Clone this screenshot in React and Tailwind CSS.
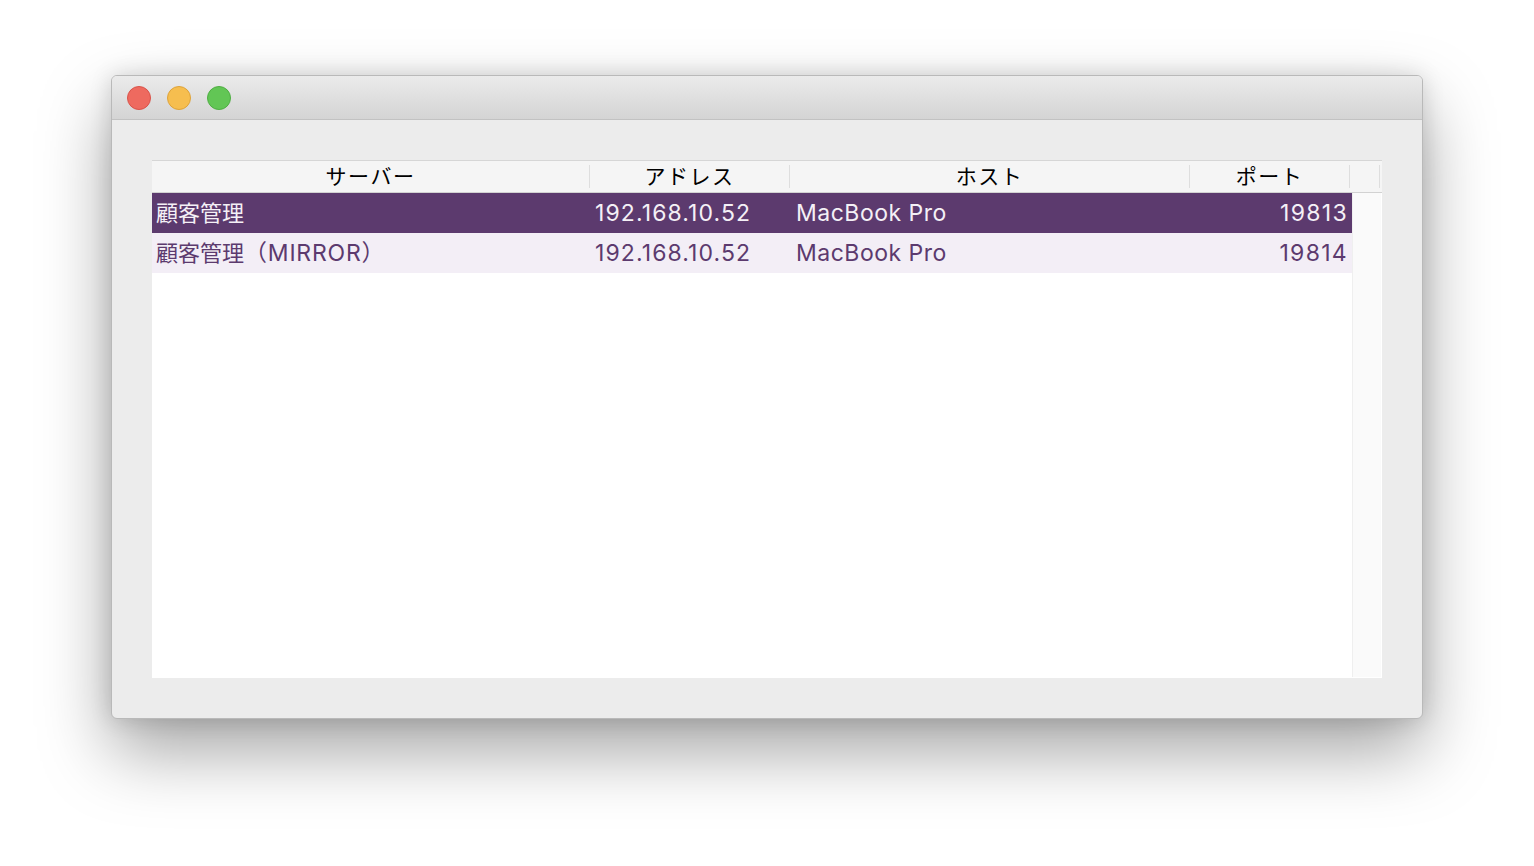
import React from 'react'

const columns = [
  { key: 'server', label: 'サーバー', width: 'w-[438px]' },
  { key: 'address', label: 'アドレス', width: 'w-[200px]' },
  { key: 'host', label: 'ホスト', width: 'w-[400px]' },
  { key: 'port', label: 'ポート', width: 'w-[160px]' },
]

const servers = [
  { server: '顧客管理', address: '192.168.10.52', host: 'MacBook Pro', port: '19813' },
  { server: '顧客管理', suffix: '（MIRROR）', address: '192.168.10.52', host: 'MacBook Pro', port: '19814' },
]

function TrafficLights() {
  return (
    <div className="flex items-center gap-[16px] pl-[15px]">
      <span className="w-[24px] h-[24px] rounded-full bg-[#ee6a5f] border border-[#d9534a]" />
      <span className="w-[24px] h-[24px] rounded-full bg-[#f6be4f] border border-[#dea33a]" />
      <span className="w-[24px] h-[24px] rounded-full bg-[#62c655] border border-[#4fae43]" />
    </div>
  )
}

export default function App() {
  const selected = 0

  return (
    <div
      className="min-h-screen bg-white pt-[75px]"
      style={{ fontFamily: 'Inter, "Noto Sans CJK JP", sans-serif' }}
    >
      <div className="mx-auto w-[1312px] h-[644px] rounded-[6px] overflow-hidden bg-[#ececec] border border-[#b9b9b9] shadow-[0_32px_70px_rgba(0,0,0,0.36),0_0_22px_rgba(0,0,0,0.14)] flex flex-col">
        {/* Title bar */}
        <div className="h-[44px] shrink-0 flex items-center bg-gradient-to-b from-[#ebebeb] to-[#d4d4d4] border-b border-[#c2c2c2]">
          <TrafficLights />
        </div>

        {/* Content */}
        <div className="flex-1 px-[40px] pt-[40px] pb-[40px]">
          <div className="h-full flex flex-col bg-white">
            {/* Header */}
            <div className="h-[33px] shrink-0 flex bg-[#f5f5f5] border-t border-[#d6d6d6] border-b border-b-[#d2d2d2] text-[21px] text-black">
              {columns.map((col) => (
                <div
                  key={col.key}
                  className={`${col.width} flex items-center justify-center border-r border-[#dedede] my-[4px] leading-none tracking-[1.5px]`}
                >
                  {col.label}
                </div>
              ))}
              <div className="w-[30px] border-r border-[#dedede] my-[4px]" />
            </div>

            {/* Body */}
            <div className="flex-1 flex">
              <div className="w-[1200px] bg-white">
                {servers.map((row, i) => {
                  const isSel = i === selected
                  return (
                    <div
                      key={row.port}
                      className={`h-[40px] flex items-center text-[22px] ${
                        isSel ? 'bg-[#5c3a6e] text-[#f4f0f6]' : 'bg-[#f3eef6] text-[#5c3a6e]'
                      }`}
                    >
                      <div className="w-[438px] pl-[4px] whitespace-nowrap">
                        {row.server}
                        {row.suffix && <span className="text-[23px] tracking-[0.8px]">{row.suffix}</span>}
                      </div>
                      <div className="w-[200px] pl-[5px] whitespace-nowrap text-[23px] tracking-[1.1px]">{row.address}</div>
                      <div className="w-[400px] pl-[6px] whitespace-nowrap text-[23px] tracking-[0.5px]">{row.host}</div>
                      <div className="w-[162px] pr-[4px] text-right whitespace-nowrap text-[23px] tracking-[1.3px]">{row.port}</div>
                    </div>
                  )
                })}
              </div>
              <div className="w-[29px] bg-[#fafafa] border-l border-[#efefef] mb-[1px]" />
            </div>
          </div>
        </div>
      </div>
    </div>
  )
}
